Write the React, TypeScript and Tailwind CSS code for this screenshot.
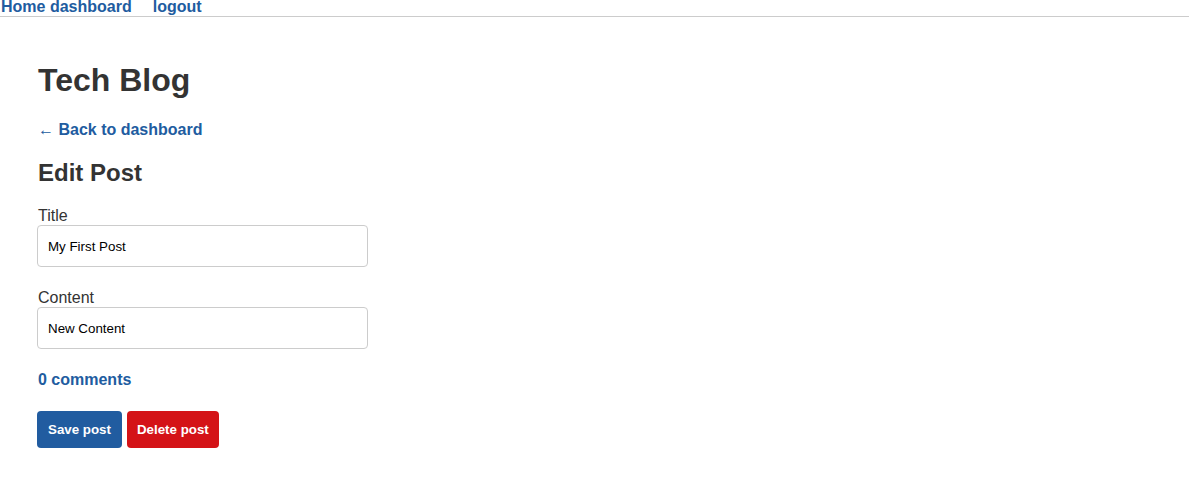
export default function App() {
  return (
    <div className="min-h-[477px] bg-white font-['Liberation_Sans',Arial,sans-serif] text-[#333]">
      <nav className="w-[1189px] border-b border-[#ccc] pb-[3px] pl-px leading-[13px] text-[16px] font-bold">
        <a href="#" className="text-[#215ca0]">Home dashboard</a>
        <a href="#" className="ml-[21px] text-[#215ca0]">logout</a>
      </nav>
      <main className="pl-[37px]">
        <h1 className="mt-[45px] pl-px text-[32px] leading-[37px] font-bold">Tech Blog</h1>
        <a href="#" className="mt-[22px] block pl-px text-[16px] leading-[18px] font-bold text-[#215ca0]">
          ← Back to dashboard
        </a>
        <h2 className="mt-[20px] pl-px text-[24px] leading-[28px] font-bold">Edit Post</h2>
        <form className="mt-[20px]">
          <label className="block pl-px text-[16px] leading-[18px]">Title</label>
          <input
            defaultValue="My First Post"
            className="block h-[42px] w-[331px] rounded-[4px] border border-[#ccc] px-[10px] text-[13.33px] text-black outline-none"
          />
          <label className="mt-[22px] block pl-px text-[16px] leading-[18px]">Content</label>
          <input
            defaultValue="New Content"
            className="block h-[42px] w-[331px] rounded-[4px] border border-[#ccc] px-[10px] text-[13.33px] text-black outline-none"
          />
          <a href="#" className="mt-[22px] block pl-px text-[16px] leading-[18px] font-bold text-[#215ca0]">
            0 comments
          </a>
          <div className="mt-[22px] flex gap-[5px]">
            <button type="button" className="h-[37px] rounded-[4px] bg-[#215ca0] px-[11px] text-[13.33px] font-bold text-white">
              Save post
            </button>
            <button type="button" className="h-[37px] rounded-[4px] bg-[#d41317] px-[10px] text-[13.33px] font-bold text-white">
              Delete post
            </button>
          </div>
        </form>
      </main>
    </div>
  )
}
